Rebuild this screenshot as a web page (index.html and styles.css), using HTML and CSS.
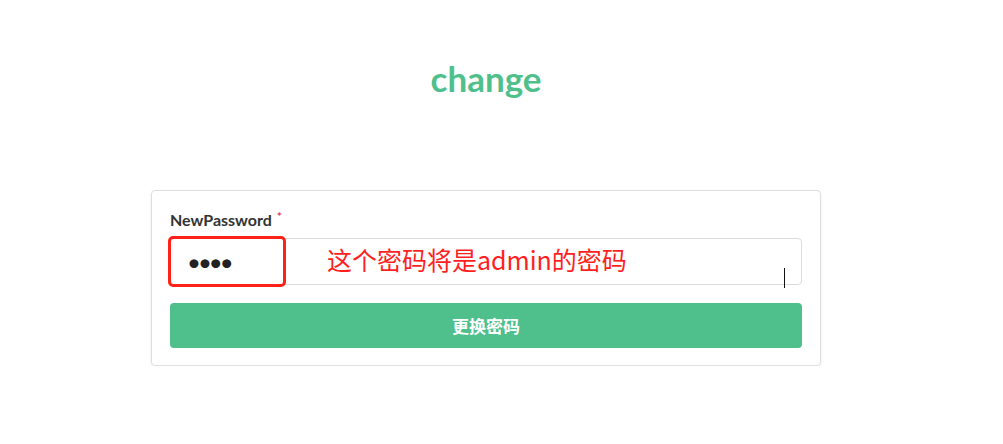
FILE: index.html
```html
<!DOCTYPE html>
<html lang="zh-CN">
<head>
<meta charset="utf-8">
<title>change</title>
<link rel="stylesheet" href="styles.css">
</head>
<body>
<div class="page">
  <h1 class="title">change</h1>
  <form class="card">
    <label class="label">NewPassword<span class="req">*</span></label>
    <div class="field">
      <input class="input" type="password" value="1234">
      <span class="mark-box"></span>
      <span class="note">这个密码将是admin的密码</span>
      <span class="caret"></span>
    </div>
    <button class="btn" type="button">更换密码</button>
  </form>
</div>
</body>
</html>
```

FILE: styles.css
```css
html, body {
  margin: 0;
  background: #fff;
  font-family: Lato, "Noto Sans CJK SC", sans-serif;
}
.page {
  width: 670px;
  margin-left: 151px;
  padding-top: 56px;
}
.title {
  margin: 0;
  text-align: center;
  font-size: 35px;
  font-weight: 700;
  line-height: 44px;
  color: #4fbf8c;
}
.card {
  margin-top: 90px;
  border: 1px solid #dedede;
  border-radius: 4px;
  box-shadow: 0 1px 3px rgba(0,0,0,0.08);
  padding: 16px 18px 17px 18px;
  display: flex;
  flex-direction: column;
}
.label {
  font-size: 16px;
  font-weight: 700;
  color: #333;
  line-height: 20px;
  margin-bottom: 8px;
}
.req {
  color: #e8365a;
  font-size: 12px;
  margin-left: 5px;
  vertical-align: 5px;
}
.field {
  position: relative;
}
.input {
  box-sizing: border-box;
  width: 100%;
  height: 47px;
  border: 1px solid #dcdcdc;
  border-radius: 4px;
  padding: 0 16px;
  font-size: 24px;
  color: #222;
  letter-spacing: -3px;
  font-family: Lato, sans-serif;
  outline: none;
}
.mark-box {
  position: absolute;
  left: -2px;
  top: -2px;
  width: 112px;
  height: 45px;
  border: 3px solid #ff2218;
  border-radius: 5px;
}
.note {
  position: absolute;
  left: 157px;
  top: 5px;
  font-family: "Noto Sans CJK SC", sans-serif;
  font-size: 25px;
  line-height: 32px;
  color: #ff1f1f;
  white-space: nowrap;
}
.caret {
  position: absolute;
  left: 614px;
  top: 30px;
  width: 1px;
  height: 20px;
  background: #111;
}
.btn {
  margin-top: 18px;
  height: 45px;
  border: 0;
  border-radius: 4px;
  background: #4fbf8c;
  color: #fff;
  font-family: "Noto Sans CJK SC", sans-serif;
  font-size: 17px;
  font-weight: 700;
}
```
